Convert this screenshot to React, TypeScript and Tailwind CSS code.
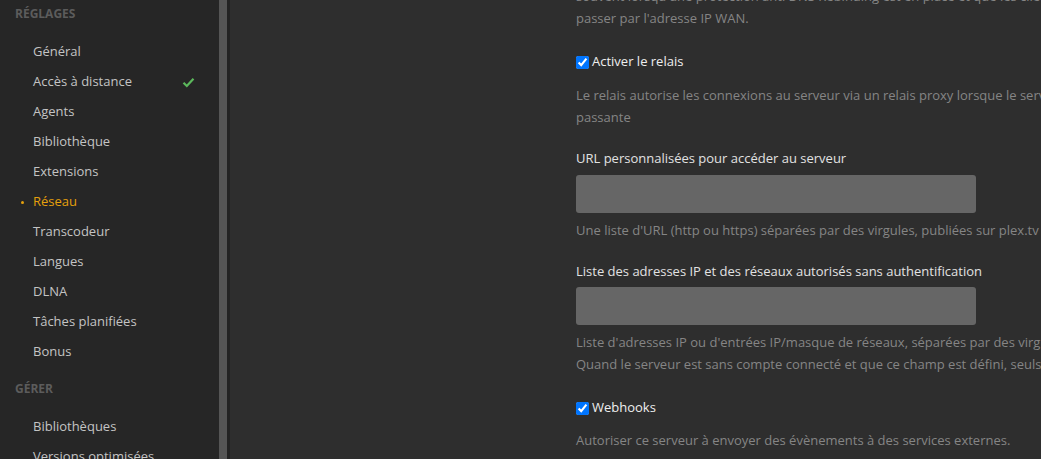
import React from "react";

const font = { fontFamily: '"Open Sans", "Noto Sans", sans-serif' };

type NavItem = { label: string; active?: boolean; done?: boolean };

const reglages: NavItem[] = [
  { label: "Général" },
  { label: "Accès à distance", done: true },
  { label: "Agents" },
  { label: "Bibliothèque" },
  { label: "Extensions" },
  { label: "Réseau", active: true },
  { label: "Transcodeur" },
  { label: "Langues" },
  { label: "DLNA" },
  { label: "Tâches planifiées" },
  { label: "Bonus" },
];

const gerer: NavItem[] = [{ label: "Bibliothèques" }, { label: "Versions optimisées" }];

function NavSection({ title, items }: { title: string; items: NavItem[] }) {
  return (
    <div className="mb-[9px]">
      <div className="flex h-[26px] items-center pl-[15px] text-[12px] font-bold uppercase text-[#5c5c5c]">
        {title}
      </div>
      <ul className="mt-[10px]">
        {items.map((it) => (
          <li
            key={it.label}
            className={`relative flex h-[30px] items-center pl-[33px] pr-[24px] text-[13px] ${
              it.active ? "text-[#e5a00d]" : "text-[#c4c4c4]"
            }`}
          >
            {it.active && (
              <span className="absolute left-[21px] top-[14px] h-[3px] w-[3px] rounded-full bg-[#e5a00d]" />
            )}
            <span className="flex-1 whitespace-nowrap">{it.label}</span>
            {it.done && (
              <svg width="13" height="11" viewBox="0 0 13 11">
                <path d="M1.5 5.8 L4.8 9 L11.5 1.8" fill="none" stroke="#5cb85c" strokeWidth="2.2" />
              </svg>
            )}
          </li>
        ))}
      </ul>
    </div>
  );
}

function Check({ label }: { label: string }) {
  return (
    <label className="flex h-[22px] items-center text-[13px] text-[#eeeeee]">
      <input type="checkbox" defaultChecked className="m-0 mr-[3px] h-[13px] w-[13px] accent-[#0075ff]" />
      <span className="whitespace-nowrap">{label}</span>
    </label>
  );
}

function Desc({ children }: { children: React.ReactNode }) {
  return <div className="whitespace-nowrap text-[13px] leading-[22px] text-[#858585]">{children}</div>;
}

function Field({ label, gap }: { label: string; gap: string }) {
  return (
    <div>
      <div className="h-[22px] whitespace-nowrap text-[13px] leading-[22px] text-[#e2e2e2]">{label}</div>
      <div className={`${gap} h-[38px] w-[400px] rounded-[3px] bg-[#666666]`} />
    </div>
  );
}

export default function App() {
  return (
    <div style={font} className="flex h-[459px] w-[1041px] overflow-hidden bg-[#2e2e2e]">
      <aside className="flex h-full w-[230px] shrink-0">
        <nav className="h-full w-[219px] bg-[#262626] pt-[1px]">
          <NavSection title="Réglages" items={reglages} />
          <NavSection title="Gérer" items={gerer} />
        </nav>
        <div className="h-full w-[8px] bg-[#555555]" />
        <div className="h-full w-[3px] bg-[#232323]" />
      </aside>

      <main className="min-w-0 flex-1 overflow-hidden pl-[346px]">
        <div className="-mt-[15px]">
          <Desc>
            souvent lorsqu'une protection anti DNS Rebinding est en place et que les clients ne peuvent pas
            <br />
            passer par l'adresse IP WAN.
          </Desc>

          <div className="mt-[22px]">
            <Check label="Activer le relais" />
            <div className="mt-[11px]">
              <Desc>
                Le relais autorise les connexions au serveur via un relais proxy lorsque le serveur n'est pas accessible, avec une bande
                <br />
                passante
              </Desc>
            </div>
          </div>

          <div className="mt-[19px]">
            <Field label="URL personnalisées pour accéder au serveur" gap="mt-[6px]" />
            <div className="mt-[6px]">
              <Desc>Une liste d'URL (http ou https) séparées par des virgules, publiées sur plex.tv</Desc>
            </div>
          </div>

          <div className="mt-[19px]">
            <Field label="Liste des adresses IP et des réseaux autorisés sans authentification" gap="mt-[5px]" />
            <div className="mt-[6px]">
              <Desc>
                Liste d'adresses IP ou d'entrées IP/masque de réseaux, séparées par des virgules, autorisées sans authentification.
                <br />
                Quand le serveur est sans compte connecté et que ce champ est défini, seuls ces clients peuvent se connecter.
              </Desc>
            </div>
          </div>

          <div className="mt-[22px]">
            <Check label="Webhooks" />
            <div className="mt-[10px]">
              <Desc>Autoriser ce serveur à envoyer des évènements à des services externes.</Desc>
            </div>
          </div>
        </div>
      </main>
    </div>
  );
}
